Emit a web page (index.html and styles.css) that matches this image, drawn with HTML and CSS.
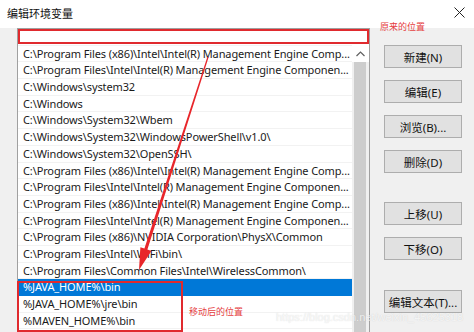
FILE: index.html
```html
<!DOCTYPE html>
<html lang="zh-CN">
<head>
    <meta charset="UTF-8">
    <meta name="viewport" content="width=device-width, initial-scale=1.0">
    <title>编辑环境变量</title>
    <link rel="stylesheet" href="styles.css">
</head>
<body>
    <div class="dialog">
        <div class="titlebar">
            <span class="title">编辑环境变量</span>
            <svg class="close" width="11" height="11" viewBox="0 0 11 11">
                <path d="M0.5 0.5 L10.5 10.5 M10.5 0.5 L0.5 10.5" stroke="#222" stroke-width="1" fill="none"/>
            </svg>
        </div>
        <div class="client">
            <div class="listbox">
                <ul class="rows">
                    <li class="row"></li>
                    <li class="row">C:\Program Files (x86)\Intel\Intel(R) Management Engine Comp...</li>
                    <li class="row">C:\Program Files\Intel\Intel(R) Management Engine Componen...</li>
                    <li class="row">C:\Windows\system32</li>
                    <li class="row">C:\Windows</li>
                    <li class="row">C:\Windows\System32\Wbem</li>
                    <li class="row">C:\Windows\System32\WindowsPowerShell\v1.0\</li>
                    <li class="row">C:\Windows\System32\OpenSSH\</li>
                    <li class="row">C:\Program Files (x86)\Intel\Intel(R) Management Engine Comp...</li>
                    <li class="row">C:\Program Files\Intel\Intel(R) Management Engine Componen...</li>
                    <li class="row">C:\Program Files (x86)\Intel\Intel(R) Management Engine Comp...</li>
                    <li class="row">C:\Program Files\Intel\Intel(R) Management Engine Componen...</li>
                    <li class="row">C:\Program Files (x86)\NVIDIA Corporation\PhysX\Common</li>
                    <li class="row">C:\Program Files\Intel\WiFi\bin\</li>
                    <li class="row">C:\Program Files\Common Files\Intel\WirelessCommon\</li>
                    <li class="row selected">%JAVA_HOME%\bin</li>
                    <li class="row">%JAVA_HOME%\jre\bin</li>
                    <li class="row">%MAVEN_HOME%\bin</li>
                </ul>
                <div class="scrollbar">
                    <div class="arrow-up">
                        <svg width="9" height="6" viewBox="0 0 9 6">
                            <path d="M0.5 5 L4.5 1 L8.5 5" stroke="#606060" stroke-width="1.2" fill="none"/>
                        </svg>
                    </div>
                    <div class="thumb"></div>
                </div>
            </div>
            <div class="buttons">
                <button class="btn">新建(N)</button>
                <button class="btn">编辑(E)</button>
                <button class="btn">浏览(B)...</button>
                <button class="btn">删除(D)</button>
                <button class="btn btn-move">上移(U)</button>
                <button class="btn">下移(O)</button>
                <button class="btn btn-text">编辑文本(T)...</button>
            </div>
        </div>

        <!-- annotations drawn on top of the screenshot -->
        <div class="mark mark-old"></div>
        <div class="mark mark-new"></div>
        <span class="note note-old">原来的位置</span>
        <span class="note note-new">移动后的位置</span>
        <svg class="arrow" width="474" height="332" viewBox="0 0 474 332">
            <polygon points="207.4,56.8 208.6,57.2 147.4,249.6 151.4,250.9 139,270 140.4,247.3 144.4,248.6" fill="#e8262b"/>
        </svg>
        <span class="watermark">https://blog.csdn.net/weixin_45625318</span>
    </div>
</body>
</html>
```

FILE: styles.css
```css
body {
    margin: 0;
    width: 474px;
    height: 332px;
    overflow: hidden;
    background-color: #f0f0f0;
    font-family: "Noto Sans", "Noto Sans CJK SC", sans-serif;
}
.dialog {
    position: relative;
    width: 474px;
    height: 332px;
    overflow: hidden;
}
.titlebar {
    height: 28px;
    background-color: white;
    display: flex;
    align-items: center;
    justify-content: space-between;
    padding: 0 9px 0 7px;
    box-sizing: border-box;
}
.title {
    font-family: "Noto Sans CJK SC", sans-serif;
    font-size: 11px;
    color: #111;
    margin-top: -3px;
}
.close {
    margin-top: -4px;
}
.client {
    display: flex;
    height: 304px;
    padding-left: 17px;
}
.listbox {
    display: flex;
    width: 353px;
    height: 320px;
    box-sizing: border-box;
    border: 1px solid #a0a0a0;
    border-bottom: none;
    background-color: white;
}
.rows {
    list-style: none;
    margin: 0;
    padding: 0;
    flex: 1;
    min-width: 0;
}
.row {
    height: 16.7px;
    box-sizing: border-box;
    border-bottom: 1px solid #f2f2f2;
    padding-left: 5px;
    font-size: 11px;
    letter-spacing: -0.12px;
    line-height: 15.7px;
    color: #1a1a1a;
    white-space: nowrap;
    overflow: hidden;
}
.row.selected {
    background-color: #0078d7;
    color: white;
    border-bottom-color: #0078d7;
}
.scrollbar {
    width: 17px;
    flex-shrink: 0;
    margin-top: 16px;
    background-color: #f0f0f0;
    display: flex;
    flex-direction: column;
}
.arrow-up {
    height: 17px;
    display: flex;
    align-items: center;
    justify-content: center;
    background-color: white;
}
.thumb {
    flex: 1;
    margin: 0 3px 0 2px;
    background-color: #cdcdcd;
}
.buttons {
    display: flex;
    flex-direction: column;
    gap: 12px;
    margin-left: 14px;
    padding-top: 17px;
}
.btn {
    width: 78px;
    height: 23px;
    padding: 0;
    background-color: #e1e1e1;
    border: 1px solid #adadad;
    font-family: "Noto Sans", "Noto Sans CJK SC", sans-serif;
    font-size: 11.5px;
    color: #111;
}
.btn-move {
    margin-top: 17px;
}
.btn-text {
    margin-top: 18px;
}
.mark {
    position: absolute;
    border: 2px solid #e02a2e;
    box-sizing: border-box;
}
.mark-old {
    left: 18px;
    top: 29px;
    width: 351px;
    height: 15px;
    background-color: white;
}
.mark-new {
    left: 17px;
    top: 281px;
    width: 166px;
    height: 51px;
}
.note {
    position: absolute;
    font-family: "Noto Sans CJK SC", sans-serif;
    font-size: 9px;
    color: #e5403f;
}
.note-old {
    left: 380px;
    top: 20px;
}
.note-new {
    left: 189px;
    top: 305px;
}
.arrow {
    position: absolute;
    left: 0;
    top: 0;
}
.watermark {
    position: absolute;
    left: 276px;
    top: 311px;
    font-family: "Liberation Sans", sans-serif;
    font-size: 11px;
    color: rgba(255, 255, 255, 0.75);
    text-shadow: 0 0 1px rgba(150, 150, 150, 0.4);
}
```
